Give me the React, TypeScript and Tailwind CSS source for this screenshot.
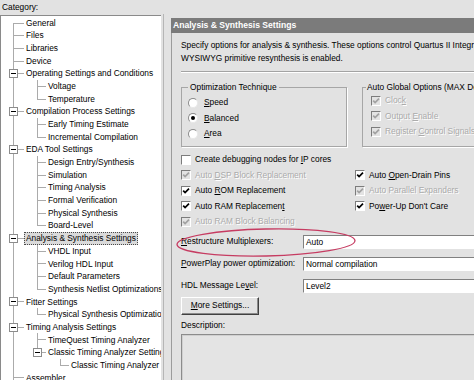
import React from "react";

type TNode = { label: string; level: number; box?: boolean; selected?: boolean };

const tree: TNode[] = [
  { label: "General", level: 0 },
  { label: "Files", level: 0 },
  { label: "Libraries", level: 0 },
  { label: "Device", level: 0 },
  { label: "Operating Settings and Conditions", level: 0, box: true },
  { label: "Voltage", level: 1 },
  { label: "Temperature", level: 1 },
  { label: "Compilation Process Settings", level: 0, box: true },
  { label: "Early Timing Estimate", level: 1 },
  { label: "Incremental Compilation", level: 1 },
  { label: "EDA Tool Settings", level: 0, box: true },
  { label: "Design Entry/Synthesis", level: 1 },
  { label: "Simulation", level: 1 },
  { label: "Timing Analysis", level: 1 },
  { label: "Formal Verification", level: 1 },
  { label: "Physical Synthesis", level: 1 },
  { label: "Board-Level", level: 1 },
  { label: "Analysis & Synthesis Settings", level: 0, box: true, selected: true },
  { label: "VHDL Input", level: 1 },
  { label: "Verilog HDL Input", level: 1 },
  { label: "Default Parameters", level: 1 },
  { label: "Synthesis Netlist Optimizations", level: 1 },
  { label: "Fitter Settings", level: 0, box: true },
  { label: "Physical Synthesis Optimizations", level: 1 },
  { label: "Timing Analysis Settings", level: 0, box: true },
  { label: "TimeQuest Timing Analyzer", level: 1 },
  { label: "Classic Timing Analyzer Settings", level: 1, box: true },
  { label: "Classic Timing Analyzer", level: 2 },
  { label: "Assembler", level: 0 },
  { label: "Design Assistant", level: 0 },
  { label: "SignalTap II Logic Analyzer", level: 0 },
];

function hasNextSibling(i: number): boolean {
  const L = tree[i].level;
  for (let j = i + 1; j < tree.length; j++) {
    if (tree[j].level < L) return false;
    if (tree[j].level === L) return true;
  }
  return false;
}

function lineKinds(i: number): ("none" | "full" | "half" | "lower")[] {
  const L = tree[i].level;
  const out: ("none" | "full" | "half" | "lower")[] = [];
  for (let c = 0; c < L; c++) {
    let j = i - 1;
    while (j >= 0 && tree[j].level !== c) j--;
    out.push(j >= 0 && hasNextSibling(j) ? "full" : "none");
  }
  const next = hasNextSibling(i);
  if (i === 0) out.push(next ? "lower" : "none");
  else out.push(next ? "full" : "half");
  return out;
}

const vLeft = ["left-[12px]", "left-[36px]", "left-[59px]"];
const hLine = ["left-[12px] w-[11px]", "left-[36px] w-[9px]", "left-[59px] w-[9px]"];
const boxLeft = ["left-[8px]", "left-[32px]", "left-[55px]"];
const textPad = ["pl-[25px]", "pl-[47px]", "pl-[70px]"];
const vKind: Record<string, string> = {
  full: "top-0 bottom-0",
  half: "top-0 h-[6.5px]",
  lower: "top-[6px] bottom-0",
  none: "hidden",
};

function TreeRow({ node, i }: { node: TNode; i: number }) {
  const kinds = lineKinds(i);
  return (
    <div className={`relative h-[12.68px] flex items-center whitespace-nowrap ${textPad[node.level]}`}>
      {kinds.map((k, c) => (
        <span key={c} className={`absolute w-px bg-[#ababab] ${vLeft[c]} ${vKind[k]}`} />
      ))}
      <span className={`absolute top-[6px] h-px bg-[#ababab] ${hLine[node.level]}`} />
      {node.box && (
        <span
          className={`absolute top-[2px] z-10 w-[9px] h-[9px] bg-white border border-[#8c8c8c] flex items-center justify-center ${boxLeft[node.level]}`}
        >
          <span className="w-[5px] h-px bg-black" />
        </span>
      )}
      {node.selected ? (
        <span className="-ml-[2px] px-[1px] h-[13px] leading-[11px] border border-dotted border-[#4a4a4a] bg-[#dadada]">
          {node.label}
        </span>
      ) : (
        <span>{node.label}</span>
      )}
    </div>
  );
}

function Check({ checked, disabled }: { checked?: boolean; disabled?: boolean }) {
  return (
    <span
      className={`relative inline-block shrink-0 w-[10px] h-[10px] border border-t-[#7c7c7c] border-l-[#7c7c7c] border-r-white border-b-white ${
        disabled ? "bg-[#e3e3e3]" : "bg-white"
      }`}
    >
      {checked && (
        <svg viewBox="0 0 8 8" className="absolute left-0 top-0 w-[8px] h-[8px]">
          <path
            d="M1.2 3.6 L3.1 5.6 L7 1.6"
            fill="none"
            stroke={disabled ? "#a2a2a2" : "#000"}
            strokeWidth="1.7"
          />
        </svg>
      )}
    </span>
  );
}

function Radio({ selected }: { selected?: boolean }) {
  return (
    <span className="inline-flex shrink-0 items-center justify-center w-[10px] h-[10px] rounded-full bg-white border border-t-[#8a8a8a] border-l-[#8a8a8a] border-r-[#e8e8e8] border-b-[#e8e8e8]">
      {selected && <span className="w-[4px] h-[4px] rounded-full bg-black" />}
    </span>
  );
}

const dis = "text-[#ababab] [text-shadow:1px_1px_0_#ffffff]";

function CheckRow({
  checked,
  disabled,
  children,
}: {
  checked?: boolean;
  disabled?: boolean;
  children: React.ReactNode;
}) {
  return (
    <div className="h-[15.5px] flex items-center gap-[4px] whitespace-nowrap">
      <Check checked={checked} disabled={disabled} />
      <span className={disabled ? dis : ""}>{children}</span>
    </div>
  );
}

function Field({ label, value }: { label: React.ReactNode; value: string }) {
  return (
    <div className="h-[14px] flex items-center whitespace-nowrap">
      <div className="w-[122px] shrink-0">{label}</div>
      <div className="w-[200px] shrink-0 h-[14px] bg-white border border-t-[#808080] border-l-[#808080] border-r-white border-b-white pl-[2px] leading-[12px]">
        {value}
      </div>
    </div>
  );
}

export default function App() {
  return (
    <div className="relative w-[474px] h-[380px] overflow-hidden bg-[#e2e2e2] text-black text-[8.35px] font-['Liberation_Sans',Arial,sans-serif] flex">
      {/* Left: category tree */}
      <div className="w-[161px] shrink-0 flex flex-col">
        <div className="h-[15px] leading-[15px] pl-[2px]">Category:</div>
        <div className="flex-1 min-h-0 overflow-hidden bg-white border-t border-l border-t-[#8a8a8a] border-l-[#8a8a8a] pt-[0.66px]">
          {tree.map((n, i) => (
            <TreeRow key={i} node={n} i={i} />
          ))}
        </div>
      </div>

      {/* Splitter */}
      <div className="w-[10px] shrink-0 pt-[14px] pl-[2px]">
        <div className="h-full w-px bg-[#b5b5b5]" />
      </div>

      {/* Right: settings page */}
      <div className="flex-1 min-w-0 overflow-hidden flex flex-col">
        <div className="h-[18px] shrink-0" />
        <div className="h-[15px] shrink-0 bg-[#7b7b7b] text-white font-bold text-[8.6px] leading-[15px] pl-[2px] whitespace-nowrap">
          Analysis &amp; Synthesis Settings
        </div>
        <div className="flex-1 min-h-0 border-l border-l-[#9c9c9c] pl-[9px] flex flex-col whitespace-nowrap">
          <div className="mt-[6px] leading-[13px]">
            Specify options for analysis &amp; synthesis. These options control Quartus II Integrated Synthesis
            <br />
            WYSIWYG primitive resynthesis is enabled.
          </div>
          <div className="mt-[6px] h-[2px] w-[320px] border-t border-t-[#a3a3a3] border-b border-b-white" />

          {/* Group boxes */}
          <div className="mt-[8px] flex items-start">
            <fieldset className="w-[166px] h-[66px] shrink-0 border border-[#a6a6a6] shadow-[1px_1px_0_#ffffff]">
              <legend className="ml-[6px] px-[2px] leading-[12px]">Optimization Technique</legend>
              <div className="mt-[2px] pl-[6px] flex flex-col">
                <div className="h-[15.5px] flex items-center gap-[6px]">
                  <Radio />
                  <span>
                    <u>S</u>peed
                  </span>
                </div>
                <div className="h-[15.5px] flex items-center gap-[6px]">
                  <Radio selected />
                  <span>
                    <u>B</u>alanced
                  </span>
                </div>
                <div className="h-[15.5px] flex items-center gap-[6px]">
                  <Radio />
                  <span>
                    <u>A</u>rea
                  </span>
                </div>
              </div>
            </fieldset>
            <fieldset className="ml-[15px] w-[200px] h-[66px] shrink-0 border border-[#a6a6a6] shadow-[1px_1px_0_#ffffff]">
              <legend className="ml-[3px] px-[1px] leading-[12px]">Auto Global Options (MAX Devices only)</legend>
              <div className="pl-[8px] flex flex-col">
                <CheckRow checked disabled>
                  Cloc<u>k</u>
                </CheckRow>
                <CheckRow checked disabled>
                  Output <u>E</u>nable
                </CheckRow>
                <CheckRow checked disabled>
                  Register <u>C</u>ontrol Signals
                </CheckRow>
              </div>
            </fieldset>
          </div>

          <div className="mt-[5px]">
            <CheckRow>
              Create debugging nodes for <u>I</u>P cores
            </CheckRow>
          </div>

          <div className="flex">
            <div className="w-[174px] shrink-0 flex flex-col">
              <CheckRow checked disabled>
                Auto <u>D</u>SP Block Replacement
              </CheckRow>
              <CheckRow checked>
                Auto <u>R</u>OM Replacement
              </CheckRow>
              <CheckRow checked>
                Auto RAM Replacemen<u>t</u>
              </CheckRow>
              <CheckRow checked disabled>
                Auto RAM Block Balancing
              </CheckRow>
            </div>
            <div className="flex flex-col">
              <CheckRow checked>
                Auto <u>O</u>pen-Drain Pins
              </CheckRow>
              <CheckRow checked disabled>
                Auto Parallel Expanders
              </CheckRow>
              <CheckRow checked>
                Po<u>w</u>er-Up Don't Care
              </CheckRow>
            </div>
          </div>

          <div className="mt-[5px] flex flex-col gap-[8px]">
            <Field
              label={
                <span>
                  <u>R</u>estructure Multiplexers:
                </span>
              }
              value="Auto"
            />
            <Field
              label={
                <span>
                  <u>P</u>owerPlay power optimization:
                </span>
              }
              value="Normal compilation"
            />
            <Field
              label={
                <span>
                  HDL Message Le<u>v</u>el:
                </span>
              }
              value="Level2"
            />
          </div>

          <button className="mt-[4px] w-[78px] h-[18px] shrink-0 flex items-center justify-center bg-[#e2e2e2] border border-t-white border-l-white border-r-[#404040] border-b-[#404040] shadow-[inset_-1px_-1px_0_#8a8a8a]">
            <span>
              <u>M</u>ore Settings...
            </span>
          </button>

          <div className="mt-[4.5px] leading-[13px]">Description:</div>
          <div className="mt-[1.5px] flex-1 w-[320px] bg-[#e4e4e4] border-t border-l border-t-[#8c8c8c] border-l-[#8c8c8c] shadow-[inset_1px_1px_0_#d0d0d0]" />
        </div>
      </div>

      {/* Hand-drawn annotation ellipse */}
      <svg
        className="absolute left-[172px] top-[224px] w-[190px] h-[38px] pointer-events-none"
        viewBox="0 0 190 38"
      >
        <ellipse
          cx="94"
          cy="18.5"
          rx="89"
          ry="13.5"
          fill="none"
          stroke="#c63c62"
          strokeWidth="1.3"
          transform="rotate(-1.2 94 18.5)"
        />
      </svg>
    </div>
  );
}
